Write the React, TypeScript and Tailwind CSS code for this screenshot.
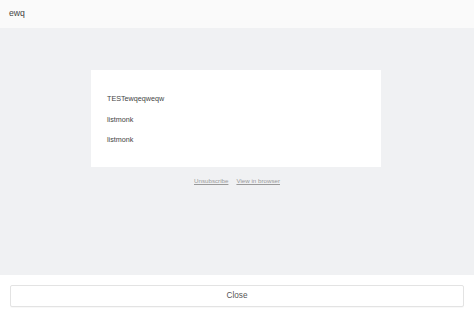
export default function App() {
  return (
    <div
      className="flex h-[317px] w-[474px] flex-col bg-white text-[#444]"
      style={{ fontFamily: '"Liberation Sans", Arial, sans-serif' }}
    >
      <div className="flex h-[28px] shrink-0 items-center bg-[#fafafa] px-[9px] text-[8.7px] text-[#444]">
        ewq
      </div>

      <div className="flex h-[247px] shrink-0 flex-col items-center bg-[#f0f1f3] pt-[42px]">
        <div className="-ml-[2px] flex h-[97px] w-[290px] flex-col gap-[12.5px] bg-white pl-[16px] pt-[25px] text-[7.2px] leading-[8px] text-[#444]">
          <p>TESTewqeqweqw</p>
          <p>listmonk</p>
          <p>listmonk</p>
        </div>
        <div className="mt-[10px] flex gap-[8px] text-[6.2px] leading-[8px] text-[#999]">
          <a className="underline">Unsubscribe</a>
          <a className="underline">View in browser</a>
        </div>
      </div>

      <div className="flex flex-1 px-[10px] pt-[10px]">
        <button className="flex h-[22px] w-full items-center justify-center rounded-[2px] border border-[#e3e3e3] bg-white text-[8.2px] text-[#555] shadow-[0_1px_1px_rgba(0,0,0,0.03)]">
          Close
        </button>
      </div>
    </div>
  );
}
